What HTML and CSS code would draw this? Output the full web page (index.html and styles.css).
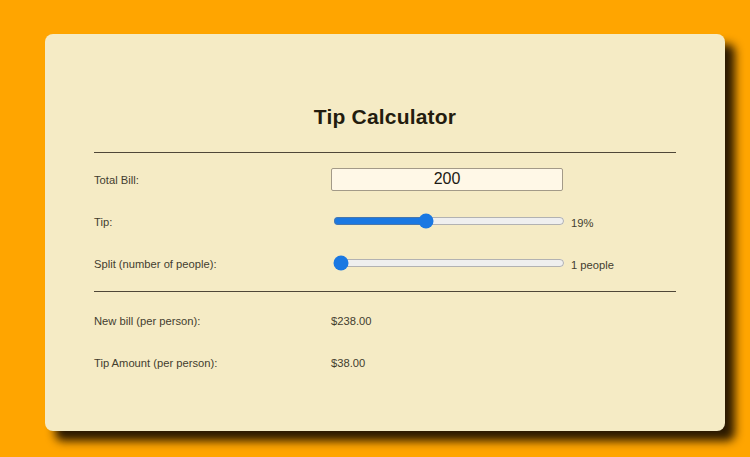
FILE: index.html
```html
<!DOCTYPE html>
<html lang="en">
<head>
    <meta charset="UTF-8">
    <meta name="viewport" content="width=device-width, initial-scale=1.0">
    <title>Tip Calculator</title>
    <link rel="stylesheet" href="styles.css">
</head>
<body>
    <div class="card">
        <h1>Tip Calculator</h1>
        <div class="rule"></div>
        <div class="row">
            <label for="bill">Total Bill:</label>
            <input type="text" id="bill" class="bill-input" value="200">
        </div>
        <div class="row">
            <label for="tip">Tip:</label>
            <div class="range-wrap">
                <input type="range" id="tip" min="0" max="48" value="19">
                <span class="range-value">19%</span>
            </div>
        </div>
        <div class="row">
            <label for="split">Split (number of people):</label>
            <div class="range-wrap">
                <input type="range" id="split" min="1" max="20" value="1">
                <span class="range-value">1 people</span>
            </div>
        </div>
        <div class="rule rule-bottom"></div>
        <div class="row">
            <span>New bill (per person):</span>
            <span>$238.00</span>
        </div>
        <div class="row">
            <span>Tip Amount (per person):</span>
            <span>$38.00</span>
        </div>
    </div>
</body>
</html>
```

FILE: styles.css
```css
body {
    margin: 0;
    background: #ffa500;
    font-family: "Liberation Sans", Arial, sans-serif;
    height: 457px;
    overflow: hidden;
}
.card {
    box-sizing: border-box;
    width: 680px;
    margin: 34px 0 0 45px;
    padding: 71px 49px 48px;
    background: #f5ebc5;
    border-radius: 8px;
    box-shadow: 10px 10px 10px rgba(20, 10, 0, 0.9);
}
h1 {
    margin: 0;
    font-size: 21px;
    line-height: 24px;
    letter-spacing: 0.2px;
    text-align: center;
    color: #231c0e;
}
.rule {
    border-top: 1px solid #4f4738;
    margin-top: 23px;
    margin-bottom: 5px;
}
.rule-bottom {
    margin-top: 7px;
    margin-bottom: 7px;
}
.row {
    display: grid;
    grid-template-columns: 237px 1fr;
    align-items: center;
    height: 42px;
    font-size: 11.2px;
    color: #433d2f;
}
.row label,
.row > span {
    padding-top: 2px;
}
.bill-input {
    box-sizing: border-box;
    width: 232px;
    height: 23px;
    margin: 0;
    padding: 0 4px;
    border: 1px solid #a39a88;
    border-radius: 2px;
    background: #fff8e7;
    font-family: "Liberation Sans", Arial, sans-serif;
    font-size: 16px;
    color: #1d1a14;
    text-align: center;
}
.range-wrap {
    display: flex;
    align-items: center;
}
.range-wrap input {
    width: 232px;
    margin: 0 6px 0 2px;
    accent-color: #1a78e2;
}
.range-value {
    padding-top: 3px;
}
```
